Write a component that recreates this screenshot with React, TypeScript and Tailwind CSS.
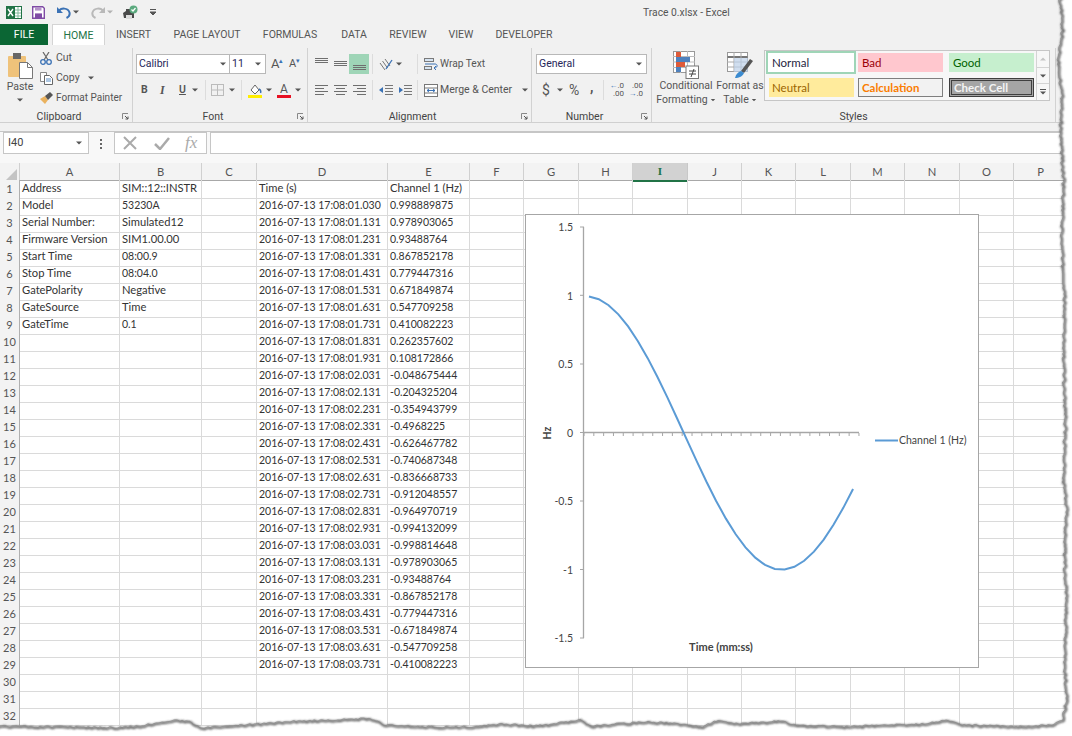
import React from "react";

const rows: string[][] = [
  ["Address", "SIM::12::INSTR", "", "Time (s)", "Channel 1 (Hz)"],
  ["Model", "53230A", "", "2016-07-13 17:08:01.030", "0.998889875"],
  ["Serial Number:", "Simulated12", "", "2016-07-13 17:08:01.131", "0.978903065"],
  ["Firmware Version", "SIM1.00.00", "", "2016-07-13 17:08:01.231", "0.93488764"],
  ["Start Time", "08:00.9", "", "2016-07-13 17:08:01.331", "0.867852178"],
  ["Stop Time", "08:04.0", "", "2016-07-13 17:08:01.431", "0.779447316"],
  ["GatePolarity", "Negative", "", "2016-07-13 17:08:01.531", "0.671849874"],
  ["GateSource", "Time", "", "2016-07-13 17:08:01.631", "0.547709258"],
  ["GateTime", "0.1", "", "2016-07-13 17:08:01.731", "0.410082223"],
  ["", "", "", "2016-07-13 17:08:01.831", "0.262357602"],
  ["", "", "", "2016-07-13 17:08:01.931", "0.108172866"],
  ["", "", "", "2016-07-13 17:08:02.031", "-0.048675444"],
  ["", "", "", "2016-07-13 17:08:02.131", "-0.204325204"],
  ["", "", "", "2016-07-13 17:08:02.231", "-0.354943799"],
  ["", "", "", "2016-07-13 17:08:02.331", "-0.4968225"],
  ["", "", "", "2016-07-13 17:08:02.431", "-0.626467782"],
  ["", "", "", "2016-07-13 17:08:02.531", "-0.740687348"],
  ["", "", "", "2016-07-13 17:08:02.631", "-0.836668733"],
  ["", "", "", "2016-07-13 17:08:02.731", "-0.912048557"],
  ["", "", "", "2016-07-13 17:08:02.831", "-0.964970719"],
  ["", "", "", "2016-07-13 17:08:02.931", "-0.994132099"],
  ["", "", "", "2016-07-13 17:08:03.031", "-0.998814648"],
  ["", "", "", "2016-07-13 17:08:03.131", "-0.978903065"],
  ["", "", "", "2016-07-13 17:08:03.231", "-0.93488764"],
  ["", "", "", "2016-07-13 17:08:03.331", "-0.867852178"],
  ["", "", "", "2016-07-13 17:08:03.431", "-0.779447316"],
  ["", "", "", "2016-07-13 17:08:03.531", "-0.671849874"],
  ["", "", "", "2016-07-13 17:08:03.631", "-0.547709258"],
  ["", "", "", "2016-07-13 17:08:03.731", "-0.410082223"],
  ["", "", "", "", ""],
  ["", "", "", "", ""],
  ["", "", "", "", ""],
];
const letters = ["A", "B", "C", "D", "E", "F", "G", "H", "I", "J", "K", "L", "M", "N", "O", "P"];
const gridCols =
  "grid grid-cols-[20px_100px_82px_55px_131px_82px_54px_55px_54px_55px_54px_54px_55px_54px_55px_54px_54px]";

const Caret = ({ className = "" }: { className?: string }) => (
  <svg width="6" height="4" viewBox="0 0 6 4" className={`shrink-0 ${className}`}>
    <path d="M0 0.5h6L3 3.500z" fill="#555" />
  </svg>
);

const Launcher = () => (
  <svg width="7" height="7" viewBox="0 0 7 7" className="shrink-0">
    <path d="M0.500 6V0.500H6" fill="none" stroke="#888" />
    <path d="M3 3l3 3M6 3.500V6H3.500" fill="none" stroke="#555" />
  </svg>
);

const Sep = ({ className = "" }: { className?: string }) => (
  <div className={`w-px h-[20px] bg-[#dcdcdc] shrink-0 ${className}`} />
);

const Group = ({
  w,
  label,
  launcher = true,
  children,
}: {
  w: string;
  label: string;
  launcher?: boolean;
  children: React.ReactNode;
}) => (
  <div className={`${w} h-[74px] shrink-0 flex flex-col border-r border-[#d2d2d2]`}>
    <div className="h-[62px] flex">{children}</div>
    <div className="h-[12px] pt-[1px] grid grid-cols-[1fr_auto_1fr] items-center text-[10.5px] leading-[11px] text-[#444]">
      <span />
      <span className={launcher ? "-translate-x-[7px]" : ""}>{label}</span>
      <span className="flex justify-end pr-[3px]">{launcher && <Launcher />}</span>
    </div>
  </div>
);

const Lines = ({ kind }: { kind: "left" | "center" | "right" | "top" | "mid" | "bot" }) => {
  const c = "#6f6f6f";
  if (kind === "left") return <svg width="13" height="10" viewBox="0 0 13 10"><path d="M0 .5h13M0 3.500h9M0 6.500h13M0 9.500h9" stroke={c} /></svg>;
  if (kind === "center") return <svg width="13" height="10" viewBox="0 0 13 10"><path d="M0 .5h13M2 3.500h9M0 6.500h13M2 9.500h9" stroke={c} /></svg>;
  if (kind === "right") return <svg width="13" height="10" viewBox="0 0 13 10"><path d="M0 .5h13M4 3.500h9M0 6.500h13M4 9.500h9" stroke={c} /></svg>;
  return <svg width="13" height="6" viewBox="0 0 13 6"><path d="M0 .5h13M0 2.500h13M0 4.500h13" stroke={c} /></svg>;
};

const CellStyle = ({ className, children }: { className: string; children: string }) => (
  <div className={`flex items-center font-['Lato',sans-serif] text-[11.5px] ${className}`}>{children}</div>
);

export default function App() {
  const vals = rows.slice(1, 29).map((r) => parseFloat(r[4]));
  const linePts = vals.map((v, i) => `${63 + i * 9.78},${218 - v * 136.7}`).join(" ");
  const ticks = Array.from({ length: 29 }, (_, i) => 58 + i * 9.82);

  // torn paper edge
  const hash = (i: number) => {
    const s = Math.sin(i * 12.9898) * 43758.5453;
    return s - Math.floor(s) - 0.5;
  };
  const bottomKeys: [number, number][] = [
    [0, 726], [60, 727], [120, 727.5], [140, 726], [175, 720], [190, 722], [200, 728], [230, 726], [300, 721],
    [370, 718.5], [385, 725], [430, 727], [470, 727], [500, 724], [538, 726], [580, 720], [591, 726], [645, 722],
    [673, 723], [701, 727], [719, 720], [733, 724], [783, 721], [794, 725], [840, 727], [922, 724], [947, 720],
    [961, 725], [1025, 727], [1050, 725], [1062, 721],
  ];
  const rightKeys: [number, number][] = [
    [0, 1060], [30, 1062], [60, 1058], [100, 1062], [130, 1060], [180, 1063], [240, 1061], [300, 1064], [360, 1063],
    [420, 1065], [480, 1063], [510, 1066], [560, 1064], [600, 1066], [660, 1064], [700, 1066], [721, 1062],
  ];
  const lerp = (keys: [number, number][], t: number) => {
    for (let k = 0; k < keys.length - 1; k++) {
      if (t <= keys[k + 1][0]) {
        const f = (t - keys[k][0]) / (keys[k + 1][0] - keys[k][0]);
        return keys[k][1] + (keys[k + 1][1] - keys[k][1]) * f;
      }
    }
    return keys[keys.length - 1][1];
  };
  const edge: string[] = [];
  for (let y = -4; y <= 721; y += 2) edge.push(`${(lerp(rightKeys, Math.max(y, 0)) + hash(y) * 2.6).toFixed(1)},${y}`);
  for (let x = 1062; x >= -4; x -= 2) edge.push(`${x},${(lerp(bottomKeys, Math.max(x, 0)) + hash(x + 3) * 1.8).toFixed(1)}`);
  const edgeStr = edge.join(" ");

  const isNum = (s: string) => s.replace(/[^A-Za-z]/g, "").length <= 1;

  return (
    <div className="relative w-[1072px] h-[736px] overflow-hidden bg-white font-['Roboto',sans-serif] text-[#444]">
      {/* title bar */}
      <div className="h-[24px] bg-[#f1f1f1] relative flex items-center">
        <svg width="16" height="15" viewBox="0 0 16 15" className="ml-[6px]">
          <rect x="5.500" y="1.500" width="10" height="12" fill="#fff" stroke="#217346" />
          <path d="M9 5h6M9 8h6M9 11h6M12 2v11" stroke="#7fb79a" />
          <rect x="0" y="1" width="9" height="13" fill="#217346" />
          <path d="M2 4l5 7M7 4l-5 7" stroke="#fff" strokeWidth="1.400" />
        </svg>
        <svg width="13" height="13" viewBox="0 0 13 13" className="ml-[10px]">
          <path d="M.7.7h10l1.600 1.600v10H.7z" fill="#fff" stroke="#7f4ba5" strokeWidth="1.400" />
          <rect x="3" y="1" width="6.500" height="3.600" fill="#b493c9" />
          <rect x="3" y="7.400" width="7" height="5" fill="#7f4ba5" />
        </svg>
        <svg width="14" height="13" viewBox="0 0 14 13" className="ml-[12px]">
          <path d="M1.500 5.500C4 1.500 11 1.500 12.500 6.500c.6 2.500-1 4.500-3 5.500" fill="none" stroke="#3b72b5" strokeWidth="2" />
          <path d="M0 1v6h6z" fill="#3b72b5" />
        </svg>
        <Caret className="ml-[2px]" />
        <svg width="14" height="13" viewBox="0 0 14 13" className="ml-[12px]">
          <path d="M12.500 5.500C10 1.500 3 1.500 1.500 6.500c-.6 2.500 1 4.500 3 5.500" fill="none" stroke="#b9b9b9" strokeWidth="2" />
          <path d="M14 1v6H8z" fill="#b9b9b9" />
        </svg>
        <Caret className="ml-[2px] opacity-40" />
        <svg width="15" height="15" viewBox="0 0 15 15" className="ml-[10px]">
          <path d="M0 8l3-2V4h5v2h3v7H1z" fill="#4a4a4a" />
          <rect x="3" y="10" width="6" height="4" fill="#ddd" />
          <circle cx="10.500" cy="4.500" r="4" fill="#5ba97e" />
          <path d="M8.500 4.500l1.500 1.500 2.500-3" stroke="#fff" fill="none" strokeWidth="1.200" />
        </svg>
        <svg width="6" height="7" viewBox="0 0 6 7" className="ml-[12px]">
          <path d="M0 .5h6M0 3h6L3 6z" stroke="#555" fill="#555" strokeWidth="1" />
        </svg>
        <div className="absolute left-[643px] top-[6px] text-[10.3px] leading-[14px] text-[#555] whitespace-nowrap">
          Trace 0.xlsx - Excel
        </div>
      </div>

      {/* tabs */}
      <div className="h-[21px] bg-[#f1f1f1] flex items-stretch text-[10.5px] text-[#555] whitespace-nowrap -mb-px relative [&>div]:pt-[1px]">
        <div className="w-[48px] bg-[#0b6634] text-white flex items-center justify-center">FILE</div>
        <div className="ml-[4px] w-[53px] bg-white border border-b-0 border-[#d4d4d4] text-[#217346] flex items-center justify-center">HOME</div>
        <div className="w-[57px] flex items-center justify-center">INSERT</div>
        <div className="w-[90px] flex items-center justify-center">PAGE LAYOUT</div>
        <div className="w-[76px] flex items-center justify-center">FORMULAS</div>
        <div className="w-[52px] flex items-center justify-center">DATA</div>
        <div className="w-[56px] flex items-center justify-center">REVIEW</div>
        <div className="w-[50px] flex items-center justify-center">VIEW</div>
        <div className="w-[76px] flex items-center justify-center">DEVELOPER</div>
      </div>

      {/* ribbon */}
      <div className="h-[79px] bg-[#f1f1f1] border-t border-b border-[#d0d0d0] flex pt-[3px] whitespace-nowrap text-[10.5px] leading-[14px] text-[#555]">
        <Group w="w-[133px]" label="Clipboard">
          <div className="w-[40px] flex flex-col items-center">
            <svg width="25" height="26" viewBox="0 0 25 26" className="mt-[5px]">
              <rect x="0" y="3" width="18" height="21" rx="1" fill="#efc27a" />
              <rect x="5" y="0" width="8" height="6" fill="#666" />
              <path d="M11.500 9.500h8l5 5v11h-13z" fill="#fff" stroke="#777" />
              <path d="M19.500 9.500v5h5" fill="none" stroke="#777" />
            </svg>
            <span className="mt-[1px]">Paste</span>
            <Caret className="mt-[4px]" />
          </div>
          <div className="flex flex-col">
            <div className="h-[20px] flex items-center">
              <svg width="12" height="13" viewBox="0 0 12 13">
                <path d="M3 0l5 8M9 0L4 8" stroke="#666" strokeWidth="1.200" />
                <circle cx="3" cy="10" r="2.300" fill="none" stroke="#3b72b5" strokeWidth="1.300" />
                <circle cx="9" cy="10" r="2.300" fill="none" stroke="#3b72b5" strokeWidth="1.300" />
              </svg>
              <span className="ml-[4px]">Cut</span>
            </div>
            <div className="h-[20px] flex items-center">
              <svg width="13" height="13" viewBox="0 0 13 13">
                <path d="M.5.5h6v9h-6z" fill="#fff" stroke="#888" />
                <path d="M4.500 3.500h5l3 3v6h-8z" fill="#fff" stroke="#666" />
                <path d="M6 7h5M6 9h5" stroke="#5b8fc7" />
              </svg>
              <span className="ml-[3px]">Copy</span>
              <Caret className="ml-[8px]" />
            </div>
            <div className="h-[20px] flex items-center">
              <svg width="13" height="12" viewBox="0 0 13 12">
                <path d="M0 7l5-3 3 4-3 4z" fill="#eab25f" />
                <path d="M5 4l5-4 3 3-5 5z" fill="#555" />
              </svg>
              <span className="ml-[3px] text-[10px]">Format Painter</span>
            </div>
          </div>
        </Group>

        <Group w="w-[175px]" label="Font">
          <div className="flex flex-col pl-[3px]">
            <div className="mt-[6px] h-[20px] flex items-stretch">
              <div className="w-[94px] bg-white border border-[#b8b8b8] flex items-center justify-between pl-[2px] pr-[3px] text-[#262659]">
                <span>Calibri</span>
                <Caret />
              </div>
              <div className="w-[37px] -ml-px bg-white border border-[#b8b8b8] flex items-center justify-between pl-[2px] pr-[4px] text-[#262659]">
                <span>11</span>
                <Caret />
              </div>
              <div className="ml-[5px] w-[16px] flex items-center text-[13px]">
                A<sup className="text-[#3b72b5] text-[7px]">▴</sup>
              </div>
              <div className="ml-[2px] w-[16px] flex items-center text-[11px]">
                A<sup className="text-[#3b72b5] text-[7px]">▾</sup>
              </div>
            </div>
            <div className="mt-[6px] h-[20px] flex items-center">
              <span className="ml-[5px] w-[19px] font-bold">B</span>
              <span className="w-[19px] italic font-semibold font-['Liberation_Serif',serif] text-[12px]">I</span>
              <span className="w-[12px] underline font-semibold">U</span>
              <Caret className="ml-[1px]" />
              <Sep className="ml-[7px]" />
              <svg width="13" height="12" viewBox="0 0 13 12" className="ml-[5px]">
                <rect x=".5" y=".5" width="12" height="11" fill="none" stroke="#bbb" />
                <path d="M6.500 0v12M0 6h13" stroke="#bbb" />
              </svg>
              <Caret className="ml-[5px]" />
              <Sep className="ml-[6px]" />
              <svg width="14" height="15" viewBox="0 0 14 15" className="ml-[6px]">
                <path d="M3 7l4-5 4 5-4 4z" fill="#fff" stroke="#666" />
                <path d="M11 6c2 1 2 3 1.500 4" fill="none" stroke="#3b72b5" strokeWidth="1.500" />
                <rect x="0" y="12" width="14" height="3" fill="#ffee00" />
              </svg>
              <Caret className="ml-[4px]" />
              <div className="ml-[5px] w-[14px] flex flex-col items-center">
                <span className="leading-[12px] text-[12px]">A</span>
                <span className="w-[14px] h-[3px] bg-[#e81123]" />
              </div>
              <Caret className="ml-[4px]" />
            </div>
          </div>
        </Group>

        <Group w="w-[224px]" label="Alignment">
          <div className="flex flex-col pl-[7px]">
            <div className="mt-[6px] h-[20px] flex items-center">
              <div className="w-[19px] -mt-[6px]"><Lines kind="top" /></div>
              <div className="w-[15px]"><Lines kind="mid" /></div>
              <div className="w-[20px] h-[20px] bg-[#9fd5b7] flex items-end justify-center pb-[3px]"><Lines kind="bot" /></div>
              <Sep className="ml-[3px]" />
              <svg width="14" height="13" viewBox="0 0 14 13" className="ml-[6px]">
                <path d="M1 5l5 7M3.500 3l5 7M6 1l5 7" stroke="#777" />
                <path d="M7 11L13 2" stroke="#3b72b5" strokeWidth="1.300" />
              </svg>
              <Caret className="ml-[3px]" />
              <Sep className="ml-[15px]" />
              <svg width="14" height="13" viewBox="0 0 14 13" className="ml-[6px]">
                <rect x=".5" y=".5" width="9" height="3" fill="#d6e4f2" stroke="#7a7a7a" />
                <rect x=".5" y="8.500" width="7" height="3" fill="#d6e4f2" stroke="#7a7a7a" />
                <path d="M1 6h10c3 0 3 4-1 4M12 8l-2 2 2 2" fill="none" stroke="#3b72b5" />
              </svg>
              <span className="ml-[2px] text-[10.2px]">Wrap Text</span>
            </div>
            <div className="mt-[6px] h-[20px] flex items-center">
              <div className="w-[19px]"><Lines kind="left" /></div>
              <div className="w-[19px]"><Lines kind="center" /></div>
              <div className="w-[19px]"><Lines kind="right" /></div>
              <Sep />
              <svg width="14" height="10" viewBox="0 0 14 10" className="ml-[6px]">
                <path d="M6 .5h8M6 3.500h8M6 6.500h8M6 9.500h8" stroke="#777" />
                <path d="M0 5l4-3v6z" fill="#3b72b5" />
              </svg>
              <svg width="14" height="10" viewBox="0 0 14 10" className="ml-[5px]">
                <path d="M6 .5h8M6 3.500h8M6 6.500h8M6 9.500h8" stroke="#777" />
                <path d="M5 5L1 2v6z" fill="#3b72b5" />
              </svg>
              <Sep className="ml-[5px]" />
              <svg width="14" height="13" viewBox="0 0 14 13" className="ml-[6px]">
                <rect x=".5" y=".5" width="13" height="12" fill="#fff" stroke="#777" />
                <path d="M0 4h14M0 9h14" stroke="#777" />
                <path d="M3 6.500h8M3 6.500l2-1.500M3 6.500l2 1.500M11 6.500L9 5M11 6.500L9 8" stroke="#3b72b5" fill="none" />
              </svg>
              <span className="ml-[2px]">Merge &amp; Center</span>
              <Caret className="ml-[10px]" />
            </div>
          </div>
        </Group>

        <Group w="w-[120px]" label="Number">
          <div className="flex flex-col pl-[4px]">
            <div className="mt-[6px] w-[111px] h-[20px] bg-white border border-[#b8b8b8] flex items-center justify-between pl-[2px] pr-[4px] text-[#262659]">
              <span>General</span>
              <Caret />
            </div>
            <div className="mt-[6px] h-[20px] flex items-center">
              <span className="ml-[6px] w-[12px] text-[14px]">$</span>
              <Caret className="ml-[3px]" />
              <span className="ml-[6px] w-[14px] text-[14px]">%</span>
              <span className="ml-[7px] w-[8px] text-[14px] font-bold leading-[10px] -mt-[6px]">,</span>
              <Sep className="ml-[5px]" />
              <div className="ml-[5px] w-[15px] flex flex-col text-[8px] leading-[8px] items-end">
                <span><span className="text-[#3b72b5]">←</span>.0</span>
                <span>.00</span>
              </div>
              <div className="ml-[4px] w-[15px] flex flex-col text-[8px] leading-[8px] items-end">
                <span>.00</span>
                <span><span className="text-[#3b72b5]">→</span>.0</span>
              </div>
            </div>
          </div>
        </Group>

        <Group w="w-[404px]" label="Styles" launcher={false}>
          <div className="w-[68px] flex flex-col items-center">
            <svg width="26" height="28" viewBox="0 0 26 28" className="mt-[3px]">
              <rect x=".5" y=".5" width="21" height="21" fill="#fff" stroke="#999" />
              <path d="M7.500 0v22M14.500 0v22M0 5.500h22M0 11h22M0 16.500h22" stroke="#bbb" />
              <rect x="3" y="1" width="5" height="5" fill="#de5b3a" />
              <rect x="3" y="6" width="14" height="5" fill="#4f81bd" />
              <rect x="3" y="11" width="9" height="5" fill="#de5b3a" />
              <rect x="3" y="16" width="5" height="5" fill="#4f81bd" />
              <rect x="13" y="15" width="12.500" height="12.500" fill="#fff" stroke="#777" />
              <path d="M16 20h7M16 23h7M21 18l-3 8" stroke="#444" />
            </svg>
            <span>Conditional</span>
            <span className="flex items-center">Formatting<Caret className="ml-[2px] scale-75" /></span>
          </div>
          <div className="w-[44px] flex flex-col items-center -ml-[2px]">
            <svg width="26" height="27" viewBox="0 0 26 27" className="mt-[4px]">
              <rect x=".5" y=".5" width="20" height="19" fill="#fff" stroke="#999" />
              <path d="M.5 5h20" stroke="#777" strokeWidth="2" />
              <path d="M7 0v20M14 0v20M0 10h20M0 15h20" stroke="#aaa" />
              <rect x="7" y="6" width="14" height="14" fill="#bcd0e8" opacity=".7" />
              <path d="M14 19l9-12 3 2-9 12z" fill="#555" />
              <path d="M8 26c1-4 3-6 6-7l3 2c-1 3-5 5-9 5z" fill="#3b8bd0" />
            </svg>
            <span>Format as</span>
            <span className="flex items-center">Table<Caret className="ml-[2px] scale-75" /></span>
          </div>
          <div className="ml-[2px] mt-[2px] w-[286px] h-[51px] bg-[#f7f7f7] border border-[#c6c6c6] flex">
            <div className="w-[271px] grid grid-cols-[92px_90px_89px] grid-rows-[25px_24px] pl-[1px]">
              <CellStyle className="w-[90px] h-[23px] pl-[4px] bg-white border-2 border-[#9fd5b7] text-[#1f1f3f]">Normal</CellStyle>
              <CellStyle className="mt-[2px] w-[85px] h-[19px] pl-[4px] bg-[#ffc7ce] text-[#9c0006]">Bad</CellStyle>
              <CellStyle className="mt-[2px] w-[85px] h-[19px] pl-[4px] ml-[1px] bg-[#c6efce] text-[#006100]">Good</CellStyle>
              <CellStyle className="ml-[3px] mt-[2px] w-[85px] h-[19px] pl-[3px] bg-[#ffeb9c] text-[#9c6500]">Neutral</CellStyle>
              <CellStyle className="mt-[2px] w-[85px] h-[19px] pl-[3px] bg-[#f2f2f2] border border-[#7f7f7f] text-[#fa7d00] font-bold">Calculation</CellStyle>
              <CellStyle className="ml-[1px] mt-[2px] w-[85px] h-[19px] pl-[2px] bg-[#a5a5a5] border-[3px] border-double border-[#3f3f3f] text-[#f4f4f4] font-bold">Check Cell</CellStyle>
            </div>
            <div className="w-[14px] flex flex-col border-l border-[#d4d4d4] bg-[#f7f7f7]">
              <div className="flex-1 border-b border-[#d4d4d4] flex items-center justify-center"><Caret className="rotate-180 opacity-30" /></div>
              <div className="flex-1 border-b border-[#d4d4d4] flex items-center justify-center"><Caret /></div>
              <div className="flex-1 flex flex-col items-center justify-center gap-[1px]">
                <span className="w-[6px] h-px bg-[#555]" />
                <Caret />
              </div>
            </div>
          </div>
        </Group>
      </div>

      <div className="h-[9px] bg-[#f1f1f1] border-b border-[#c6c6c6]" />

      {/* formula bar */}
      <div className="h-[31px] bg-[#f8f8f8] flex items-start whitespace-nowrap">
        <div className="ml-[3px] w-[86px] h-[22px] bg-white border border-[#c6c6c6] flex items-center justify-between pl-[4px] pr-[6px] text-[11px] text-[#444]">
          <span>I40</span>
          <Caret />
        </div>
        <div className="ml-[11px] mt-[7px] flex flex-col gap-[2px]">
          <span className="w-[2px] h-[2px] bg-[#666]" />
          <span className="w-[2px] h-[2px] bg-[#666]" />
          <span className="w-[2px] h-[2px] bg-[#666]" />
        </div>
        <div className="ml-[12px] w-[93px] h-[22px] bg-white border border-[#c6c6c6] flex items-center pl-[8px]">
          <svg width="14" height="14" viewBox="0 0 14 14"><path d="M1 1l12 12M13 1L1 13" stroke="#aaa" strokeWidth="2" /></svg>
          <svg width="16" height="13" viewBox="0 0 16 13" className="ml-[17px]"><path d="M1 7l5 5L15 1" fill="none" stroke="#aaa" strokeWidth="2.500" /></svg>
          <span className="ml-[15px] font-['Liberation_Serif',serif] italic text-[17px] text-[#aaa]">fx</span>
        </div>
        <div className="ml-[3px] flex-1 h-[22px] bg-white border border-[#c6c6c6]" />
      </div>

      {/* sheet */}
      <div className="relative font-['Lato',sans-serif] text-[11.2px] text-[#333] whitespace-nowrap">
        <div className={`${gridCols} h-[17px] bg-[#f3f3f3] border-b border-[#a8a8a8] box-content -mb-px`}>
          <div className="border-r border-[#d0d0d0] flex items-end justify-end">
            <svg width="14" height="13" viewBox="0 0 14 13" className="mr-[1px] mb-[1px]"><path d="M13 1v11H2z" fill="#c4c4c4" /></svg>
          </div>
          {letters.map((l) => (
            <div
              key={l}
              className={
                l === "I"
                  ? "bg-[#d2d2d2] border-r border-[#c8c8c8] border-b-2 border-b-[#217346] text-[#217346] font-bold font-['Liberation_Serif',serif] flex items-center justify-center"
                  : "border-r border-[#d0d0d0] text-[#555] flex items-center justify-center"
              }
            >
              {l}
            </div>
          ))}
        </div>
        {rows.map((r, i) => (
          <div key={i} className={`${gridCols} h-[17px]`}>
            <div className="bg-[#f3f3f3] border-r border-[#b0b0b0] border-b border-b-[#d4d4d4] flex items-center justify-center text-[11px] text-[#555] pt-[1px]">
              {i + 1}
            </div>
            {letters.map((_, c) => (
              <div
                key={c}
                className={`border-r border-b border-[#dadada] flex items-center pl-[2px] overflow-visible ${
                  r[c] && isNum(r[c]) ? "text-[10.5px]" : ""
                }`}
              >
                {r[c] ?? ""}
              </div>
            ))}
          </div>
        ))}

        {/* chart */}
        <div className="absolute left-[525px] top-[51px] w-[454px] h-[454px] bg-white border border-[#a6a6a6]">
          <svg width="452" height="452" viewBox="0 0 452 452" className="block" fontFamily="Lato, sans-serif" fontSize="10.5" fill="#444">
            <path d="M57.500 12V423" stroke="#a6a6a6" strokeWidth="1.300" fill="none" />
            {[12, 80.3, 149, 217.5, 286, 354.5, 423].map((y) => (
              <path key={y} d={`M54 ${y}h4`} stroke="#a6a6a6" />
            ))}
            <path d="M57.500 217.500H333" stroke="#a6a6a6" strokeWidth="1.300" />
            {ticks.map((x) => (
              <path key={x} d={`M${x} 218v3`} stroke="#a6a6a6" />
            ))}
            {[["1.5", 12], ["1", 80.5], ["0.5", 149], ["0", 217.5], ["-0.5", 286], ["-1", 354.5], ["-1.5", 423]].map(([t, y]) => (
              <text key={String(t)} x="47" y={Number(y) + 4} textAnchor="end">{t}</text>
            ))}
            <polyline points={linePts} fill="none" stroke="#5b9bd5" strokeWidth="2" />
            <text transform="translate(25 218) rotate(-90)" textAnchor="middle" fontWeight="700" fontSize="10.5">Hz</text>
            <text x="195" y="436" textAnchor="middle" fontWeight="700" fontSize="11">Time (mm:ss)</text>
            <path d="M349 225.500h23" stroke="#5b9bd5" strokeWidth="2" />
            <text x="373" y="229">Channel 1 (Hz)</text>
          </svg>
        </div>
      </div>

      {/* torn paper edge */}
      <svg width="1072" height="736" viewBox="0 0 1072 736" className="absolute left-0 top-0 pointer-events-none">
        <defs>
          <filter id="tornBlur" x="-5%" y="-5%" width="110%" height="110%">
            <feGaussianBlur stdDeviation="0.8" />
          </filter>
        </defs>
        <polygon points={`${edgeStr} -4,740 1076,740 1076,-4`} fill="#fff" />
        <polyline points={edgeStr} transform="translate(0.8 0.8)" fill="none" stroke="#444" strokeWidth="1.800" filter="url(#tornBlur)" />
        <polyline points={edgeStr} fill="none" stroke="#888" strokeWidth="0.7" />
      </svg>
    </div>
  );
}
